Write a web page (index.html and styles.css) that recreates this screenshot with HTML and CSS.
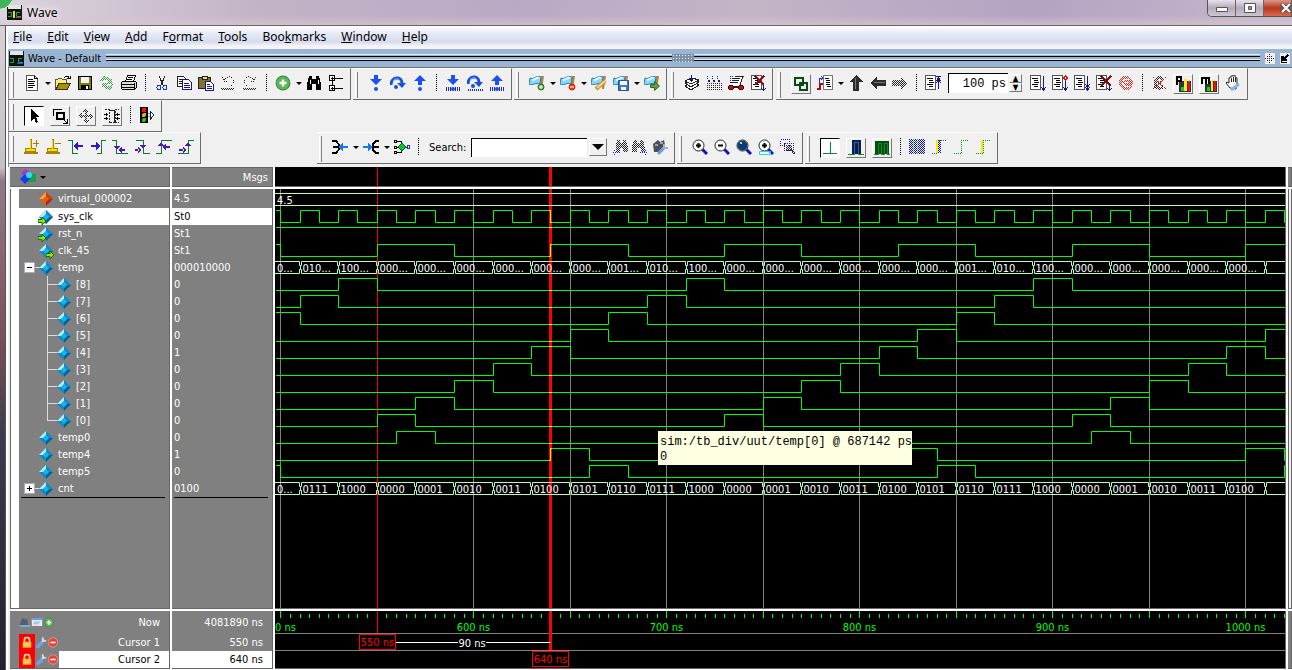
FILE: index.html
```html
<!DOCTYPE html>
<html lang="en">
<head>
    <meta charset="UTF-8">
    <meta name="viewport" content="width=device-width, initial-scale=1.0">
    <title>Wave</title>
    <link rel="stylesheet" href="styles.css">
</head>
<body>
    <!-- shared icon shapes -->
    <svg class="defs" width="0" height="0">
        <defs>
            <pattern id="ditherBlack" width="2" height="2" patternUnits="userSpaceOnUse"><path d="M0 0h1v1H0zM1 1h1v1H1z" fill="#222"/></pattern>
            <pattern id="ditherBlue" width="2" height="2" patternUnits="userSpaceOnUse"><path d="M0 0h1v1H0zM1 1h1v1H1z" fill="#1010a0"/></pattern>
            <pattern id="ditherGreen" width="2" height="2" patternUnits="userSpaceOnUse"><path d="M0 0h1v1H0zM1 1h1v1H1z" fill="#3a9a3a"/></pattern>
            <pattern id="ditherRed" width="2" height="2" patternUnits="userSpaceOnUse"><path d="M0 0h1v1H0zM1 1h1v1H1z" fill="#e03020"/></pattern>
        </defs>
        <symbol id="diamond" viewBox="0 0 16 16">
            <path d="M8 1L15 8L8 15L1 8z" fill="#12a4e0"/>
            <path d="M8 1L8 5L5 8H1z" fill="#b6ecfb"/>
            <path d="M8 1L15 8H11L8 5z" fill="#1688c4"/>
            <path d="M15 8L8 15V11L11 8z" fill="#0a5f8c"/>
            <path d="M1 8L8 15V11L5 8z" fill="#1a86c0"/>
            <path d="M8 5L11 8L8 11L5 8z" fill="#10b4f0"/>
        </symbol>
        <symbol id="diamondOrange" viewBox="0 0 16 16">
            <path d="M8 1L15 8L8 15L1 8z" fill="#e06018"/>
            <path d="M8 1V5L5 8H1z" fill="#f8a050"/>
            <path d="M15 8L8 15V11L11 8z" fill="#a82c10"/>
            <path d="M8 1L15 8H11L8 5z" fill="#c84010"/>
        </symbol>
        <symbol id="ioArrow" viewBox="0 0 8 8">
            <path d="M0 2.500H4V0L8 4L4 8V5.500H0z" fill="#8ae800" stroke="#1a6a10" stroke-width="1"/>
        </symbol>
        <symbol id="page" viewBox="0 0 16 16">
            <path d="M1.500 .5h10v14h-10z" fill="#fff" stroke="#555"/>
            <path d="M3 3.500h6M5 5.500h4M5 7.500h5M3 9.500h6M5 11.500h4" stroke="#000"/>
        </symbol>
        <symbol id="flag" viewBox="0 0 16 16">
            <path d="M12 1h3L13 14h-2z" fill="#b9813c"/>
            <path d="M1 3C4 5 7 0 12 2L11 9C7 7 4 11 0 9z" fill="#8fd4f6" stroke="#1b7fb8"/>
            <path d="M3 5C6 5 7 2 10 3" stroke="#e4f7ff" stroke-width="2" fill="none"/>
        </symbol>
        <symbol id="down" viewBox="0 0 16 16">
            <path d="M6 0h4v4h4L8 10L2 4h4z" fill="#1c50f0"/><circle cx="8" cy="14" r="2" fill="#1c50f0"/>
        </symbol>
        <symbol id="over" viewBox="0 0 16 16">
            <path d="M1 10C1 1 12 1 12 8" fill="none" stroke="#1a50d8" stroke-width="3"/>
            <path d="M7 8h9L12 13z" fill="#1a50d8"/><path d="M3 6C5 3 9 3 10 6" stroke="#7fb8ff" fill="none"/>
            <circle cx="6" cy="12" r="2" fill="#1a50d8"/>
        </symbol>
        <symbol id="up" viewBox="0 0 16 16">
            <path d="M8 0L14 6H10V10H6V6H2z" fill="#1c50f0"/><circle cx="8" cy="14" r="2" fill="#1c50f0"/>
        </symbol>
        <symbol id="bars" viewBox="0 0 16 4">
            <path d="M1.500 0v4M3.500 0v4M5.500 0v4M10.500 0v4M12.500 0v4M14.500 0v4" stroke="#1a2fb0"/>
        </symbol>
        <symbol id="lens" viewBox="0 0 16 16">
            <path d="M10 10L15 15" stroke="#1212c8" stroke-width="3"/>
            <circle cx="6.500" cy="6.500" r="5.500" fill="#fff" stroke="#222"/>
        </symbol>
        <symbol id="binoculars" viewBox="0 0 16 16">
            <path d="M3 1h3v3h4V1h3l2 8v6h-5V9H6v6H1V9z" fill="#000"/>
            <path d="M4.500 5v4M12.500 5v4" stroke="#fff"/>
        </symbol>
        <symbol id="appIcon" viewBox="0 0 15 15">
            <path d="M0 0h15v15H0z" fill="#111"/><path d="M1 0h13v4H1z" fill="#e4e4e4"/>
            <path d="M1 7.500h3.500v4H1M13 7.500H9.500v4H14" stroke="#16b040" fill="none"/>
        </symbol>
        <symbol id="lock" viewBox="0 0 14 14">
            <path d="M4 7V4a3 3 0 0 1 6 0v3" fill="none" stroke="#e8d9b0" stroke-width="2"/>
            <path d="M2 6h10v7H2z" fill="#f5b82e"/><path d="M3 8.500h8M3 10.500h8" stroke="#ffe28a"/>
        </symbol>
        <symbol id="wrench" viewBox="0 0 14 14">
            <path d="M3 12L8 7" stroke="#6ba2ee" stroke-width="4" stroke-linecap="round"/>
            <path d="M8 6L11 4M9 1v4h4" stroke="#d4dae2" stroke-width="2" fill="none"/>
        </symbol>
        <symbol id="minus" viewBox="0 0 14 14">
            <circle cx="7" cy="7" r="5.500" fill="#e0483c" stroke="#f0988c"/><path d="M4 7h6" stroke="#fff" stroke-width="2"/>
        </symbol>
        <symbol id="plus" viewBox="0 0 14 14">
            <circle cx="7" cy="7" r="6" fill="#5cb85a" stroke="#3c8a3a"/><path d="M4 7h6M7 4v6" stroke="#fff" stroke-width="2"/>
        </symbol>
    </svg>

    <header class="titlebar">
        <span class="orb"></span>
        <svg class="app-icon" viewBox="0 0 15 15"><use href="#appIcon"/><path d="M7 6v7" stroke="#e8e020" stroke-width="2"/><path d="M9 12.500h5" stroke="#e02060"/></svg>
        <h1>Wave</h1>
        <div class="window-buttons">
            <button type="button" aria-label="Minimize"><svg viewBox="0 0 14 10"><path d="M1.500 4.500h11v4h-11z" fill="#fff" stroke="#555"/></svg></button>
            <button type="button" aria-label="Maximize"><svg viewBox="0 0 14 10"><path d="M1.500 .5h11v9h-11z" fill="#fff" stroke="#555"/><path d="M5.500 3.500h3v3h-3z" fill="#999" stroke="#555"/></svg></button>
            <button type="button" class="close" aria-label="Close"><svg viewBox="0 0 14 10"><path d="M2 1L12 9M12 1L2 9" stroke="#555" stroke-width="4"/><path d="M3 1L11 9M11 1L3 9" stroke="#fff" stroke-width="2"/></svg></button>
        </div>
    </header>

    <div class="frame">
        <div class="glass"></div>
        <div class="window">
            <nav class="menubar">
                <a href="#"><u>F</u>ile</a>
                <a href="#"><u>E</u>dit</a>
                <a href="#"><u>V</u>iew</a>
                <a href="#"><u>A</u>dd</a>
                <a href="#">F<u>o</u>rmat</a>
                <a href="#"><u>T</u>ools</a>
                <a href="#">Boo<u>k</u>marks</a>
                <a href="#"><u>W</u>indow</a>
                <a href="#"><u>H</u>elp</a>
            </nav>

            <div class="panel-title">
                <svg class="app-icon" viewBox="0 0 15 15"><use href="#appIcon"/><path d="M8 12.500h6" stroke="#3040ff"/></svg>
                <h2>Wave - Default</h2>
                <div class="rails"><span class="dots"></span></div>
                <button type="button" class="mini" aria-label="Undock"><svg viewBox="0 0 9 9"><path d="M4.500 0v9M0 4.500h9M2 2.500h5M2 6.500h5" stroke="#222" stroke-dasharray="1 1"/></svg></button>
                <button type="button" class="mini" aria-label="Zoom pane"><svg viewBox="0 0 9 9"><path d="M1.500 2v6H7" fill="none" stroke="#000"/><path d="M8 1L4 5M3 2v4h4" fill="none" stroke="#000" stroke-width="2"/></svg></button>
            </div>

            <div class="toolbars">
                <div class="row">
                    <div class="group">
                        <button type="button" class="tb" aria-label="New"><svg viewBox="0 0 16 16"><path d="M2.500 .5h8l3 3v12h-11z" fill="#fff" stroke="#555"/><path d="M10.500 .5v3h3M4 4.500h5M4 6.500h7M4 8.500h6M4 10.500h7M4 12.500h5" stroke="#000" fill="none"/></svg></button>
                        <button type="button" class="drop" aria-label="New options"></button>
                        <button type="button" class="tb" aria-label="Open"><svg viewBox="0 0 16 16"><path d="M.5 14V4.500h2l1-1h3l1 1h4V8" fill="#ffef70" stroke="#554"/><path d="M1 14.500L4 8.500H15.500L12 14.500z" fill="#a89200" stroke="#332"/><path d="M9 3C11 0 13 1 14.500 3.500M12 3.500h3V1" fill="none" stroke="#000"/></svg></button>
                        <button type="button" class="tb" aria-label="Save"><svg viewBox="0 0 16 16"><path d="M1.500 1.500h13v13h-13z" fill="#7f7f00" stroke="#000"/><path d="M4 2h8v6H4z" fill="#f4f4f4"/><path d="M4 10h8v4H4z" fill="#000"/><path d="M9 11h2v3H9z" fill="#fff"/></svg></button>
                        <button type="button" class="tb" aria-label="Reload"><svg viewBox="0 0 16 16"><path d="M1 6L4 2C7 0 9 2 11 4L13 3V9H7L9 7C7 4 5 4 4 7z" fill="url(#ditherGreen)"/><path d="M15 9L12 14C9 16 7 14 5 12L3 13V8H9L7 10C9 12 11 12 12 9z" fill="url(#ditherGreen)"/></svg></button>
                        <button type="button" class="tb" aria-label="Print"><svg viewBox="0 0 16 16"><path d="M4.500 6.500L6.500 .5h8l-2 6" fill="#fff" stroke="#000"/><path d="M.5 7.500L3 6h11l1.500 1.500v5l-2 2H2l-1.500-1z" fill="#ddd" stroke="#000"/><path d="M7 2.500h5M6 4.500h5M1 9.500h12M1 12.500h12M13.500 8v6" stroke="#000"/><path d="M9 11h3" stroke="#dd0"/></svg></button>
                        <span class="sep"></span>
                        <button type="button" class="tb" aria-label="Cut"><svg viewBox="0 0 16 16"><path d="M5 1L9 10M11 1L7 10" stroke="#222"/><circle cx="5" cy="12.500" r="2" fill="none" stroke="#1630d8"/><circle cx="11" cy="12.500" r="2" fill="none" stroke="#1630d8"/></svg></button>
                        <button type="button" class="tb" aria-label="Copy"><svg viewBox="0 0 16 16"><path d="M1.500 1.500h6l2 2v8h-8z" fill="#fff" stroke="#222"/><path d="M3 4.500h4M3 6.500h4M3 8.500h4" stroke="#222"/><path d="M6.500 4.500h6l3 3v7h-9z" fill="#fff" stroke="#14148c"/><path d="M8 8.500h5M8 10.500h6M8 12.500h6" stroke="#14148c"/></svg></button>
                        <button type="button" class="tb" aria-label="Paste"><svg viewBox="0 0 16 16"><path d="M.5 2.500h12v11H.5z" fill="#7c7430" stroke="#222"/><path d="M4 1h5v3H4z" fill="#e8e060" stroke="#222"/><path d="M7.500 6.500h5l3 3v6h-8z" fill="#fff" stroke="#14148c"/><path d="M9 9.500h3M9 11.500h5M9 13.500h5" stroke="#14148c"/></svg></button>
                        <button type="button" class="tb" aria-label="Undo"><svg viewBox="0 0 16 16"><path d="M4 5C7 0 14 1 14 6C14 9 12 10 10 11M2 2L4 6L8 6" fill="none" stroke="#222" stroke-dasharray="1 1"/><path d="M1 13.500h14M2 14.500h12" stroke="#222" stroke-dasharray="1 1"/></svg></button>
                        <button type="button" class="tb" aria-label="Redo"><svg viewBox="0 0 16 16"><path d="M12 5C9 0 2 1 2 6C2 9 4 10 6 11M14 2L12 6L8 6" fill="none" stroke="#222" stroke-dasharray="1 1"/><path d="M1 13.500h14M2 14.500h12" stroke="#222" stroke-dasharray="1 1"/></svg></button>
                        <span class="sep"></span>
                        <button type="button" class="tb smooth" aria-label="Add"><svg viewBox="0 0 14 14"><use href="#plus"/></svg></button>
                        <button type="button" class="drop" aria-label="Add options"></button>
                        <button type="button" class="tb" aria-label="Find"><svg viewBox="0 0 16 16"><use href="#binoculars"/></svg></button>
                        <button type="button" class="tb" aria-label="Expand tree"><svg viewBox="0 0 16 16"><path d="M1.500 .5h5v5h-5zM1.500 10.500h5v5h-5z" fill="#fff" stroke="#000"/><path d="M3 3.500h3M4.500 2v3M3 13.500h3M4.500 12v3M7 3.500h8M7 13.500h8M4.500 6v4" stroke="#000"/></svg></button>
                    </div>
                    <div class="group">
                        <button type="button" class="tb smooth" aria-label="Step into"><svg viewBox="0 0 16 16"><use href="#down"/></svg></button>
                        <button type="button" class="tb smooth" aria-label="Step over"><svg viewBox="0 0 16 16"><use href="#over"/></svg></button>
                        <button type="button" class="tb smooth" aria-label="Step out"><svg viewBox="0 0 16 16"><use href="#up"/></svg></button>
                        <span class="sep"></span>
                        <button type="button" class="tb smooth" aria-label="Step into current"><svg viewBox="0 0 16 16"><use href="#down"/><use href="#bars" y="12" height="4"/></svg></button>
                        <button type="button" class="tb smooth" aria-label="Step over current"><svg viewBox="0 0 16 16"><use href="#over" y="-1"/><path d="M1 15h15" stroke="#1a2fb0" stroke-width="2" stroke-dasharray="1 1"/></svg></button>
                        <button type="button" class="tb smooth" aria-label="Step out current"><svg viewBox="0 0 16 16"><use href="#up"/><use href="#bars" y="12" height="4"/></svg></button>
                    </div>
                    <div class="group">
                        <button type="button" class="tb smooth" aria-label="Add bookmark"><svg viewBox="0 0 16 16"><use href="#flag"/><circle cx="12" cy="12" r="3" fill="#58a848" stroke="#2c6a20"/><path d="M10 12h4M12 10v4" stroke="#fff"/></svg></button>
                        <button type="button" class="drop" aria-label="Bookmark options"></button>
                        <button type="button" class="tb smooth" aria-label="Delete bookmark"><svg viewBox="0 0 16 16"><use href="#flag"/><circle cx="12" cy="12" r="3" fill="#e84010" stroke="#b02c08"/><path d="M10 12h4" stroke="#fff"/></svg></button>
                        <button type="button" class="drop" aria-label="Delete options"></button>
                        <button type="button" class="tb smooth" aria-label="Edit bookmark"><svg viewBox="0 0 16 16"><use href="#flag"/><path d="M5 14L14 6" stroke="#c8882c" stroke-width="4"/><path d="M6 13L14 6" stroke="#f8d888" stroke-width="2"/></svg></button>
                        <button type="button" class="tb smooth" aria-label="Save bookmark"><svg viewBox="0 0 16 16"><use href="#flag"/><path d="M5.500 5.500h10v10h-10z" fill="#3a78c8" stroke="#2a5090"/><path d="M7 6h7v4H7zM8 12h5v3H8z" fill="#f4f4f4"/></svg></button>
                        <button type="button" class="drop" aria-label="Save options"></button>
                        <button type="button" class="tb smooth" aria-label="Go to bookmark"><svg viewBox="0 0 16 16"><use href="#flag"/><path d="M6.500 9.500h4v-3l5 4.500l-5 4.500v-3h-4z" fill="#5ca040" stroke="#2c6a20"/></svg></button>
                    </div>
                    <div class="group">
                        <button type="button" class="tb" aria-label="Layers"><svg viewBox="0 0 16 16"><path d="M1 11L8 7L15 10L7 15z" fill="#fff" stroke="#222"/><path d="M1 8L8 4L15 7L7 12z" fill="#fff" stroke="#222"/><path d="M1 6L8 3L15 5L7 9z" fill="#fff" stroke="#222"/><path d="M7.500 0v5M5 3l2.500 3L10 3" stroke="#14148c" fill="none"/></svg></button>
                        <button type="button" class="tb" aria-label="Signals grid"><svg viewBox="0 0 16 16"><path d="M1 1.500h15M1 3.500h15" stroke="#1a1a8c" stroke-dasharray="1 4"/><path d="M2 6h2M7 6h2M12 6h2" stroke="#1a1a8c" stroke-width="2"/><path d="M1 8.500h15M1 10.500h15M1 12.500h15M1 14.500h15" stroke="#222" stroke-dasharray="1 1"/></svg></button>
                        <button type="button" class="tb" aria-label="Search log"><svg viewBox="0 0 16 16"><path d="M5 1h9L11 10H2z" fill="#fff"/><path d="M7 1.500h8L12 10M5 3.500h7M4 5.500h7M3 7.500h7" stroke="#222" fill="none"/><path d="M2 1v8M4 1v6" stroke="#1a1a8c" stroke-dasharray="1 1"/><path d="M4 12h9" stroke="#222" stroke-width="2"/><circle cx="3" cy="12.500" r="2.500" fill="#c01020" stroke="#400"/><circle cx="13" cy="12.500" r="2.500" fill="#c01020" stroke="#400"/></svg></button>
                        <button type="button" class="tb" aria-label="Clear log"><svg viewBox="0 0 16 16"><use href="#page"/><path d="M13.500 9v6M11 13l2.500 2L16 13" stroke="#14148c" fill="none"/><path d="M5 1L14 10M14 1L5 10" stroke="#8c1010" stroke-width="2"/></svg></button>
                    </div>
                    <div class="group wide-gap">
                        <button type="button" class="tb box" aria-label="Link"><svg viewBox="0 0 16 16"><path d="M2 2h8v7H2zM7 7h7v7H7z" fill="none" stroke="#084c14" stroke-width="2"/></svg></button>
                        <button type="button" class="tb" aria-label="Restart"><svg viewBox="0 0 16 16"><path d="M6.500 .5h9v14h-9z" fill="#fff" stroke="#777"/><path d="M8 3.500h4M9 5.500h4M9 7.500h4M9 9.500h4M10 11.500h4" stroke="#000"/><path d="M2.500 8V3h3M4 1l2 2l-2 2" stroke="#1630d8" fill="none"/><path d="M0 14h3V9h3" stroke="#a01018" stroke-width="2" fill="none"/></svg></button>
                        <button type="button" class="drop" aria-label="Restart options"></button>
                        <button type="button" class="tb" aria-label="Up"><svg viewBox="0 0 16 16"><path d="M8 0L15 7H11V16H5V7H1z" fill="#2c2c2c"/><path d="M7.500 3v11" stroke="#777"/></svg></button>
                        <button type="button" class="tb" aria-label="Back"><svg viewBox="0 0 16 16"><path d="M0 8L7 2V5H16V11H7V14z" fill="#2c2c2c"/><path d="M4 7.500h11" stroke="#777"/></svg></button>
                        <button type="button" class="tb" aria-label="Forward"><svg viewBox="0 0 16 16"><path d="M16 8L9 2V5H0V11H9V14z" fill="url(#ditherBlack)"/></svg></button>
                        <span class="sep"></span>
                        <button type="button" class="tb" aria-label="Restart simulation"><svg viewBox="0 0 16 16"><use href="#page" x="-1"/><path d="M13.500 2v12M11 1.500h5M11 6l2.500-3L16 6M11 8l2.500-3L16 8" stroke="#14148c" fill="none"/></svg></button>
                        <input class="run-length" type="text" value="100 ps" aria-label="Run length">
                        <span class="spin"><button type="button" aria-label="Increase">&#9650;</button><button type="button" aria-label="Decrease">&#9660;</button></span>
                        <button type="button" class="tb" aria-label="Run"><svg viewBox="0 0 16 16"><use href="#page" x="-1"/><path d="M13.500 1v14M11 12l2.500 3L16 12" stroke="#14148c" fill="none"/></svg></button>
                        <button type="button" class="tb" aria-label="Continue run"><svg viewBox="0 0 16 16"><use href="#page" x="-1"/><path d="M13.500 5v10M11 12l2.500 3L16 12" stroke="#14148c" fill="none"/><path d="M13.500 1l2 2l-2 2l-2-2z" fill="#fff" stroke="#e01010"/></svg></button>
                        <button type="button" class="tb" aria-label="Run all"><svg viewBox="0 0 16 16"><use href="#page" x="-1"/><path d="M13.500 1v14M11 9l2.500 3L16 9M11 12l2.500 3L16 12" stroke="#14148c" fill="none"/></svg></button>
                        <button type="button" class="tb" aria-label="Break"><svg viewBox="0 0 16 16"><use href="#page" x="-1"/><path d="M13.500 9v6M11 13l2.500 2L16 13" stroke="#14148c" fill="none"/><path d="M5 1L15 11M15 1L5 11" stroke="#7c1010" stroke-width="2"/></svg></button>
                        <button type="button" class="tb" aria-label="Stop"><svg viewBox="0 0 16 16"><circle cx="8" cy="8" r="7" fill="url(#ditherRed)"/><path d="M11 5C7 3 4 6 5 9C6 12 10 12 12 11M7 7.500h4" stroke="#fff" fill="none"/></svg></button>
                        <span class="sep"></span>
                        <button type="button" class="tb" aria-label="Disable coverage"><svg viewBox="0 0 16 16"><path d="M12 4C8 1 4 4 4 8C4 12 8 15 12 12" stroke="url(#ditherBlack)" stroke-width="3" fill="none"/><path d="M2 2L15 14M15 2L2 14" stroke="#b02020" stroke-dasharray="2 1"/></svg></button>
                        <button type="button" class="tb box" aria-label="Performance profile"><svg viewBox="0 0 16 16"><path d="M4 5h12v11H4z" fill="#333"/><path d="M2 9V1h4v4H2" fill="#f0f0f0" stroke="#000" stroke-width="2"/><path d="M6 11h3v4H6z" fill="#10d020"/><path d="M9 3h3v12H9z" fill="#ffe81a"/><path d="M13 5h2v10h-2z" fill="#f01010"/></svg></button>
                        <button type="button" class="tb box" aria-label="Memory profile"><svg viewBox="0 0 16 16"><path d="M4 5h12v11H4z" fill="#333"/><path d="M0 1h9v7H0z" fill="#f0f0f0"/><path d="M1 8V2h7v6M4.500 2v6" fill="none" stroke="#000" stroke-width="2"/><path d="M6 11h3v4H6z" fill="#10d020"/><path d="M10 4h2v11h-2z" fill="#ffe81a"/><path d="M13 5h2v10h-2z" fill="#f01010"/></svg></button>
                        <button type="button" class="tb smooth" aria-label="Pan"><svg viewBox="0 0 16 16"><path d="M5 13L1 8L2 7L4 8V3L6 2V1h2V0h2v2l2 1v6l-1 5z" fill="#fff" stroke="#222"/><path d="M6.500 3v4M8.500 2v5M10.500 3v4" stroke="#222"/><path d="M6 15L14 9" stroke="#8ab4e8" stroke-width="3"/></svg></button>
                    </div>
                </div>

                <div class="row">
                    <div class="group">
                        <button type="button" class="tb box on" aria-label="Select mode"><svg viewBox="0 0 16 16"><path d="M5 1V13L8 10L10 15L12 14L10 9H14z" fill="#000"/></svg></button>
                        <button type="button" class="tb box" aria-label="Zoom mode"><svg viewBox="0 0 16 16"><path d="M1.500 8V1.500H10" fill="none" stroke="#000"/><path d="M5 5h7v6H5z" fill="none" stroke="#000" stroke-width="2"/><path d="M10 10L15 15M15 11v4h-4" fill="none" stroke="#000"/></svg></button>
                        <button type="button" class="tb box" aria-label="Pan mode"><svg viewBox="0 0 16 16"><path d="M8 0L11 4H9V7H12V5L16 8L12 11V9H9V12H11L8 16L5 12H7V9H4V11L0 8L4 5V7H7V4H5z" fill="url(#ditherBlack)"/></svg></button>
                        <button type="button" class="tb box" aria-label="Edit mode"><svg viewBox="0 0 16 16"><path d="M1 1.500h4v13h6v-13h4M11 14.500h4" fill="none" stroke="#222" stroke-dasharray="2 1"/><path d="M5.500 2h5v12" fill="none" stroke="#222"/><path d="M0 6.500h4M0 10.500h4M12 6.500h4M12 10.500h4M2.500 5v3M2.500 9v3M13.500 5v3M13.500 9v3" stroke="#000"/></svg></button>
                        <span class="sep"></span>
                        <button type="button" class="tb" aria-label="Stop wave drawing"><svg viewBox="0 0 16 16"><path d="M1 0h8v16H1z" fill="#000"/><circle cx="5" cy="3" r="2.500" fill="#f01010"/><circle cx="5" cy="8" r="2" fill="#e8a818"/><circle cx="5" cy="13" r="2" fill="#20c020"/><path d="M11.500 4.500L15 8L11.500 12z" fill="#fff" stroke="#222"/><path d="M9 6.500h2M9 9.500h2" stroke="#20c0e0"/></svg></button>
                    </div>
                </div>

                <div class="row">
                    <div class="group">
                        <button type="button" class="tb" aria-label="Insert cursor"><svg viewBox="0 0 16 16"><path d="M6 0h2v9h4v4H1V9h5zM0 13h14v2H0z" fill="#a88200"/><path d="M6 1h1v9h4v2H2v-2h4z" fill="#ffe000"/><path d="M9 4.500h6M12.500 1v7" stroke="#a07c00"/></svg></button>
                        <button type="button" class="tb" aria-label="Delete cursor"><svg viewBox="0 0 16 16"><path d="M6 0h2v9h4v4H1V9h5zM0 13h14v2H0z" fill="#a88200"/><path d="M6 1h1v9h4v2H2v-2h4z" fill="#ffe000"/><path d="M9 4.500h6" stroke="#a07c00"/></svg></button>
                        <button type="button" class="tb" aria-label="Previous transition"><svg viewBox="0 0 16 16"><path d="M0 1.500h4.500v13h5" fill="none" stroke="#0a7a30"/><path d="M5 7L10 3v3h5v2h-5v3z" fill="#3c10d0"/></svg></button>
                        <button type="button" class="tb" aria-label="Next transition"><svg viewBox="0 0 16 16"><path d="M7 14.500h4.500v-13h4" fill="none" stroke="#0a7a30"/><path d="M11 7L6 3v3H1v2h5v3z" fill="#3c10d0"/></svg></button>
                        <button type="button" class="tb" aria-label="Previous falling edge"><svg viewBox="0 0 16 16"><path d="M0 1.500h4.500v13h11" fill="none" stroke="#0a7a30"/><path d="M2 7h6L5 11zM6 11l4-3v6zM9 10h4v2H9z" fill="#4818b8"/></svg></button>
                        <button type="button" class="tb" aria-label="Next falling edge"><svg viewBox="0 0 16 16"><path d="M2 1.500h7.500v13h6" fill="none" stroke="#0a7a30"/><path d="M6 6h6L9 10zM8 11L4 8v6zM1 10h4v2H1z" fill="#4818b8"/></svg></button>
                        <button type="button" class="tb" aria-label="Previous rising edge"><svg viewBox="0 0 16 16"><path d="M0 14.500h5.500v-13h10" fill="none" stroke="#0a7a30"/><path d="M2 7h6L5 3zM6 8l4-3v6zM9 7h5v2H9z" fill="#4818b8"/></svg></button>
                        <button type="button" class="tb" aria-label="Next rising edge"><svg viewBox="0 0 16 16"><path d="M0 14.500h10.500v-13h5" fill="none" stroke="#0a7a30"/><path d="M7 7h6L10 3zM9 11L5 8v6zM1 10h5v2H1z" fill="#4818b8"/></svg></button>
                    </div>
                    <div class="group search-group">
                        <button type="button" class="tb" aria-label="Find previous driver"><svg viewBox="0 0 16 16"><path d="M0 2h4l4 5M0 14h4l4-5M1 8h6" fill="none" stroke="#000" stroke-width="2"/><path d="M6 8L11 4v3h5v2h-5v3z" fill="#1478f0"/></svg></button>
                        <button type="button" class="drop" aria-label="Driver options"></button>
                        <button type="button" class="tb" aria-label="Find reader"><svg viewBox="0 0 16 16"><path d="M16 2h-3L10 5v6l3 3h3M10 8h6" fill="none" stroke="#000" stroke-width="2"/><path d="M10 8L5 4v3H0v2h5v3z" fill="#1478f0"/></svg></button>
                        <button type="button" class="drop" aria-label="Reader options"></button>
                        <button type="button" class="tb" aria-label="Trace"><svg viewBox="0 0 16 16"><path d="M3 2.500h4.500v11H3M2 8.500h12" fill="none" stroke="#000"/><path d="M.5 1.500h2v2h-2zM.5 7.500h2v2h-2zM.5 12.500h2v2h-2z" fill="#fff" stroke="#000"/><path d="M8 4l4 4l-4 4l-4-4z" fill="#10c030" stroke="#063"/><path d="M13.500 6.500h2v3h-2z" fill="#fff" stroke="#1630d8"/></svg></button>
                        <span class="sep"></span>
                        <label for="search">Search:</label>
                        <input id="search" class="search" type="text">
                        <button type="button" class="combo" aria-label="Search history"></button>
                        <button type="button" class="tb" aria-label="Search backward"><svg viewBox="0 0 16 16"><path d="M5 1h3v3h3V1h3l2 8v4h-5V9H8v4H4V8z" fill="url(#ditherBlack)"/><path d="M1 13.500h7M1 13.500l3-3M1 13.500l2 2" stroke="#1c1ce0" stroke-dasharray="1 1" fill="none"/></svg></button>
                        <button type="button" class="tb near" aria-label="Search forward"><svg viewBox="0 0 16 16"><path d="M2 1h3v3h3V1h3l2 8v4H9V9H5v4H0V8z" fill="url(#ditherBlack)"/><path d="M8 13.500h7M15 13.500l-3-3M15 13.500l-2 2" stroke="#1c1ce0" stroke-dasharray="1 1" fill="none"/></svg></button>
                        <button type="button" class="tb smooth" aria-label="Search options"><svg viewBox="0 0 16 16"><path d="M1 5L6 1L8 3L12 1L13 6L6 13H2z" fill="#4a5058"/><path d="M3 6h3M8 4h3" stroke="#9aa4ae" stroke-width="2"/><path d="M7 14L12 9" stroke="#6a9ce0" stroke-width="3" stroke-linecap="round"/><path d="M12 5v4h4" stroke="#a8b0bc" stroke-width="2" fill="none"/></svg></button>
                    </div>
                    <div class="group">
                        <button type="button" class="tb smooth" aria-label="Zoom in"><svg viewBox="0 0 16 16"><use href="#lens"/><path d="M4 6.500h5M6.500 4v5" stroke="#000" stroke-width="2"/></svg></button>
                        <button type="button" class="tb smooth" aria-label="Zoom out"><svg viewBox="0 0 16 16"><use href="#lens"/><path d="M4 6.500h5" stroke="#000" stroke-width="2"/></svg></button>
                        <button type="button" class="tb smooth" aria-label="Zoom full"><svg viewBox="0 0 16 16"><use href="#lens"/><circle cx="6.500" cy="6.500" r="5" fill="#0c3c70"/><circle cx="5" cy="4" r="1" fill="#fff"/></svg></button>
                        <button type="button" class="tb smooth" aria-label="Zoom in on cursor"><svg viewBox="0 0 16 16"><use href="#lens"/><path d="M4 6.500h5M6.500 4v5" stroke="#000" stroke-width="2"/><path d="M1.500 12.500h11v3h-11zM5.500 1v2" fill="none" stroke="#20d8e8"/></svg></button>
                        <button type="button" class="tb" aria-label="Zoom other"><svg viewBox="0 0 16 16"><path d="M.5 .5h9v6h-9zM4.500 4.500h9V11h-9z" fill="none" stroke="#1a1a8c" stroke-dasharray="1 1"/><circle cx="9" cy="9" r="3" fill="url(#ditherBlack)"/><path d="M11 11L15 15" stroke="#333" stroke-width="2" stroke-dasharray="1 1"/></svg></button>
                    </div>
                    <div class="group">
                        <button type="button" class="tb box on" aria-label="Waveform"><svg viewBox="0 0 16 16"><path d="M1 13.500h14M8.500 2v12" stroke="#0a8a30"/></svg></button>
                        <button type="button" class="tb box" aria-label="Expand one"><svg viewBox="0 0 16 16"><path d="M4 0h9v14H4z" fill="#14146c"/><path d="M0 14.500h6.500V2.500h4v12H16" fill="none" stroke="#0a8a30"/></svg></button>
                        <button type="button" class="tb box" aria-label="Expand all"><svg viewBox="0 0 16 16"><path d="M1 1h14v13H1z" fill="#064c0c"/><path d="M0 14.500h4.500V3.500h3v11h3v-11h3v11H16" fill="none" stroke="#0a8a30"/></svg></button>
                        <span class="sep"></span>
                        <button type="button" class="tb" aria-label="Expand full"><svg viewBox="0 0 16 16"><path d="M0 0h16v15H0z" fill="url(#ditherBlue)"/><path d="M4.500 0v15M8.500 0v15" stroke="#3a9a70" stroke-dasharray="1 1"/></svg></button>
                        <button type="button" class="tb" aria-label="Expand cursor"><svg viewBox="0 0 16 16"><path d="M6 1h4v13H6z" fill="url(#ditherBlue)"/><path d="M6 1v13" stroke="#ffe800" stroke-width="2"/><path d="M1 14.500h6M8 1.500h7" stroke="#0a8a30" stroke-dasharray="1 1"/></svg></button>
                        <button type="button" class="tb" aria-label="Collapse all"><svg viewBox="0 0 16 16"><path d="M1 14.500h7.500v-13H15" fill="none" stroke="#0a8a30" stroke-dasharray="1 1"/></svg></button>
                        <button type="button" class="tb" aria-label="Collapse cursor"><svg viewBox="0 0 16 16"><path d="M7 1v14" stroke="#ffe800" stroke-width="2"/><path d="M1 14.500h7.500v-13H15" fill="none" stroke="#0a8a30" stroke-dasharray="1 1"/></svg></button>
                    </div>
                </div>
            </div>

            <main class="wave">
                <div class="cell head name-head">
                    <svg viewBox="0 0 16 16"><path d="M5 0L10 3L5 8L1 4z" fill="#b030d8"/><path d="M8 5h8v8H8z" fill="#18a050"/><path d="M5 5L10 10L5 15L0 10z" fill="#1040e8"/><circle cx="9" cy="6" r="3" fill="#30d8f8"/></svg>
                    <button type="button" class="drop" aria-label="Object options"></button>
                </div>
                <div class="cell head msgs">Msgs</div>
                <div class="cell black"><svg class="plot" id="headPlot"></svg></div>
                <div class="cell head"></div>

                <div class="cell names">
                    <ul id="names"></ul>
                </div>
                <div class="cell values">
                    <ul id="values"></ul>
                </div>
                <div class="cell black">
                    <svg class="plot" id="wavePlot"></svg>
                    <div class="tip">sim:/tb_div/uut/temp[0] @ 687142 ps<br>0</div>
                </div>
                <div class="cell scroll"></div>

                <div class="cell foot">
                    <div class="now">
                        <svg viewBox="0 0 14 14"><path d="M1 10L3 3L6 2L7 4L9 2L11 10z" fill="#555f6c"/><path d="M1 11h12" stroke="#78b4f0" stroke-width="2"/></svg>
                        <svg viewBox="0 0 14 14"><path d="M1 2h12v9H1z" fill="#e8eef8"/><path d="M1 3h12" stroke="#5a94e0" stroke-width="2"/><path d="M3 6.500h8M3 8.500h6" stroke="#8aa4c8"/></svg>
                        <svg viewBox="0 0 14 14"><use href="#plus" x="1" y="1" width="12" height="12"/></svg>
                        <span>Now</span>
                    </div>
                    <div class="cursor">
                        <svg class="locked" viewBox="0 0 14 14"><use href="#lock"/></svg>
                        <svg viewBox="0 0 14 14"><use href="#wrench"/></svg>
                        <svg viewBox="0 0 14 14"><use href="#minus"/></svg>
                        <span>Cursor 1</span>
                    </div>
                    <div class="cursor active">
                        <svg class="locked" viewBox="0 0 14 14"><use href="#lock"/></svg>
                        <svg viewBox="0 0 14 14"><use href="#wrench"/></svg>
                        <svg viewBox="0 0 14 14"><use href="#minus"/></svg>
                        <span>Cursor 2</span>
                    </div>
                </div>
                <div class="cell foot">
                    <div class="now"><span>4081890 ns</span></div>
                    <div class="cursor"><span>550 ns</span></div>
                    <div class="cursor active"><span>640 ns</span></div>
                </div>
                <div class="cell black"><svg class="plot" id="rulerPlot"></svg></div>
                <div class="cell foot"></div>
            </main>
        </div>
    </div>

    <script src="wave.js"></script>
</body>
</html>
```
FILE: styles.css
```css
* {
    box-sizing: border-box;
}

body {
    margin: 0;
    height: 100vh;
    display: flex;
    flex-direction: column;
    overflow: hidden;
    background: #f0f0f0;
    font-family: "DejaVu Sans Condensed", "Noto Sans", sans-serif;
    font-size: 11px;
    color: #000;
}

button, input {
    font: inherit;
    margin: 0;
    padding: 0;
    border: 0;
    background: none;
    color: inherit;
}

h1, h2, ul {
    margin: 0;
    padding: 0;
    font-weight: normal;
    list-style: none;
}

svg {
    display: block;
    flex: none;
}

.defs {
    position: absolute;
}

/* title bar */
.titlebar {
    position: relative;
    flex: none;
    height: 26px;
    display: flex;
    align-items: center;
    padding-left: 7px;
    background: linear-gradient(rgba(255, 255, 255, 0) 60%, rgba(220, 200, 208, 0.6)), linear-gradient(90deg, #dcd3dc, #c2b4c6 20%, #b8aac4 40%, #c3b5c6 58%, #b3a3c3 80%, #c4b8ca);
    border-bottom: 1px solid #666;
    overflow: hidden;
}

.orb {
    position: absolute;
    left: -16px;
    top: -20px;
    width: 30px;
    height: 30px;
    border-radius: 50%;
    background: #3fb45c;
    border: 1px solid #e8f4e8;
}

.app-icon {
    width: 15px;
    height: 15px;
}

.titlebar h1 {
    margin-left: 5px;
    font-family: "Noto Sans", sans-serif;
    font-size: 12px;
    line-height: 24px;
    text-shadow: 0 0 6px #fff, 0 0 10px #fff;
}

.window-buttons {
    margin-left: auto;
    align-self: flex-start;
    display: flex;
    height: 17px;
    border: 1px solid #555;
    border-top: 0;
    border-right: 0;
    border-radius: 0 0 0 5px;
    overflow: hidden;
}

.window-buttons button {
    width: 28px;
    display: flex;
    align-items: center;
    justify-content: center;
    border-right: 1px solid #6a6470;
    background: linear-gradient(#e8e2ea, #b4aab8 50%, #cfc6d2);
}

.window-buttons .close {
    width: 28px;
    padding-left: 16px;
    background: linear-gradient(#d89888, #b83820 50%, #d86a50);
}

.window-buttons svg {
    width: 14px;
    height: 10px;
}

.frame {
    flex: 1;
    display: flex;
    min-height: 0;
}

.glass {
    width: 6px;
    flex: none;
    background: linear-gradient(#d8d2d8, #c4c0c6 22%, #94788a 24%, #7c5058 48%, #3c3a4c 64%, #22222c);
    border-right: 1px solid #555;
}

.window {
    flex: 1;
    min-width: 0;
    display: flex;
    flex-direction: column;
    border-left: 2px solid #fff;
}

/* menus */
.menubar {
    flex: none;
    height: 20px;
    display: flex;
    gap: 15px;
    padding-left: 5px;
    background: linear-gradient(#fff, #e4e9f5 40%, #d6dcec 80%, #f4f4f8);
    font-family: "Noto Sans", sans-serif;
    font-size: 12px;
    line-height: 21px;
}

.menubar a {
    color: #000;
    text-decoration: none;
}

.panel-title {
    flex: none;
    height: 22px;
    display: flex;
    align-items: center;
    gap: 5px;
    padding: 0 2px 0 1px;
    background: #9ab5d3;
    border-top: 3px solid #f4f4f4;
    border-bottom: 1px solid #707070;
}

.panel-title h2 {
    margin-left: -1px;
    font-size: 11px;
}

.rails {
    flex: 1;
    height: 8px;
    display: flex;
    justify-content: center;
    background: linear-gradient(#dff4fa 1px, #9ab5d3 1px, #9ab5d3 2px, #000 2px, #000 3px, #9ab5d3 3px, #9ab5d3 5px, #dff4fa 5px, #dff4fa 6px, #000 6px, #000 7px, #9ab5d3 7px);
}

.dots {
    width: 22px;
    background: radial-gradient(circle, #fff 1px, #7890aa 1px) 0 0 / 3px 3px;
}

.mini {
    width: 10px;
    height: 11px;
    background: #f0f0f0;
}

.mini svg {
    width: 9px;
    height: 9px;
    shape-rendering: crispEdges;
}

/* toolbars */
.toolbars {
    flex: none;
    border-left: 1px solid #8a8a8a;
    padding-bottom: 3px;
}

.row {
    display: flex;
    gap: 2px;
    height: 32px;
}

.group {
    flex: none;
    display: flex;
    align-items: center;
    padding: 0 3px 2px 12px;
    border-right: 1px solid #6c6c6c;
    border-bottom: 1px solid #6c6c6c;
    border-top: 1px solid #fff;
    background: linear-gradient(#808080, #808080) 4px 3px / 1px 26px no-repeat, linear-gradient(#fff, #fff) 2px 3px / 1px 26px no-repeat;
}

.wide-gap {
    margin-left: 1px;
}

.search-group {
    margin-left: 114px;
}

.tb {
    flex: none;
    width: 22px;
    height: 22px;
    display: flex;
    align-items: center;
    justify-content: center;
}

.tb svg {
    width: 16px;
    height: 16px;
    shape-rendering: crispEdges;
}

.smooth svg {
    shape-rendering: auto;
}

.near {
    width: 18px;
}

.box {
    width: 20px;
    height: 20px;
    margin: 2px 3px 0;
    border: 1px solid;
    border-color: #fff #777 #777 #fff;
}

.box.on {
    background: #fff;
    border-color: #000 #fff #fff #000;
}

.drop {
    width: 9px;
    height: 20px;
    display: flex;
    align-items: center;
    justify-content: center;
}

.drop::before, .combo::before {
    content: "";
    border: 3px solid transparent;
    border-top-color: #000;
    border-bottom: 0;
}

.sep {
    width: 1px;
    height: 18px;
    margin: 0 5px;
    background: repeating-linear-gradient(#000 0 1px, transparent 1px 2px);
}

.run-length {
    width: 60px;
    height: 20px;
    margin-left: 4px;
    padding-right: 2px;
    text-align: right;
    background: #fff;
    border-top: 1px solid #000;
    border-left: 1px solid #000;
    font-family: "Liberation Mono", monospace;
    font-size: 12px;
}

.spin {
    width: 13px;
    height: 18px;
    margin: 0 5px 0 1px;
    display: flex;
    flex-direction: column;
}

.spin button {
    flex: 1;
    font-size: 8px;
    line-height: 7px;
    border: 1px solid;
    border-color: #fff #777 #777 #fff;
}

.group label {
    margin: 0 5px;
}

.search {
    width: 116px;
    height: 19px;
    background: #fff;
    border-top: 1px solid #000;
    border-left: 1px solid #000;
}

.combo {
    width: 18px;
    height: 18px;
    margin: 0 2px;
    display: flex;
    align-items: center;
    justify-content: center;
    border: 1px solid;
    border-color: #fff #777 #777 #fff;
}

.combo::before {
    border-width: 6px;
    border-bottom: 0;
}

/* wave area: names, values, plot, scroll strip */
.wave {
    flex: 1;
    min-height: 0;
    display: grid;
    grid-template-columns: 160px 101px minmax(0, 1fr) 4px;
    grid-template-rows: 20px minmax(0, 1fr) 58px;
    gap: 2px;
    margin-left: 2px;
    padding-bottom: 1px;
    background: #fff;
}

.cell {
    position: relative;
    overflow: hidden;
    background: #808080;
    color: #fff;
    border-right: 1px solid #666;
    border-bottom: 1px solid #666;
}

.head {
    border-top: 1px solid #666;
}

.name-head {
    display: flex;
    align-items: center;
    gap: 2px;
    padding-left: 10px;
}

.name-head svg {
    width: 16px;
    height: 16px;
}

.msgs {
    padding-right: 4px;
    text-align: right;
    line-height: 19px;
}

.black {
    background: #000;
}

.plot {
    width: 100%;
    height: 100%;
    font-size: 11px;
}

.names {
    border-left: 1px solid #666;
    background: linear-gradient(90deg, #fff 8px, #808080 8px);
}

.names ul {
    padding-left: 8px;
}

.names li {
    height: 17px;
    display: flex;
    align-items: center;
    padding-left: 19px;
    line-height: 17px;
}

.names li:first-child, .values li:first-child {
    height: 19px;
    line-height: 20px;
}

.names li.parent {
    padding-left: 6px;
    background: linear-gradient(#ddd, #ddd) 14px 8px / 8px 1px no-repeat;
}

.names li.bit {
    padding-left: 37px;
    background: linear-gradient(#ddd, #ddd) 28px 0 / 1px 100% no-repeat, linear-gradient(#ddd, #ddd) 28px 8px / 10px 1px no-repeat;
}

.names li.bit.last {
    background: linear-gradient(#ddd, #ddd) 28px 0 / 1px 9px no-repeat, linear-gradient(#ddd, #ddd) 28px 8px / 10px 1px no-repeat;
}

.names li svg {
    width: 16px;
    height: 16px;
    margin-right: 4px;
}

.names li.selected, .values li.selected {
    background: #fff;
    color: #000;
}

.toggle {
    position: relative;
    width: 9px;
    height: 9px;
    margin-right: 4px;
    background: #fff;
    outline: 1px solid #aab;
}

.toggle::before, .toggle.plus::after {
    content: "";
    position: absolute;
    left: 2px;
    top: 4px;
    width: 5px;
    height: 1px;
    background: #000;
}

.toggle.plus::after {
    left: 4px;
    top: 2px;
    width: 1px;
    height: 5px;
}

.values li {
    height: 17px;
    padding-left: 2px;
    line-height: 17px;
}

.names ul::after, .values ul::after {
    content: "";
    display: block;
    height: 1px;
    margin: 0 4px 0 2px;
    background: #000;
}

.scroll {
    background: #f0f0f0;
    border-left: 1px solid #666;
}

/* cursor rows under the plot */
.foot > div {
    height: 17px;
    display: flex;
    align-items: center;
    padding-left: 9px;
}

.foot .now {
    height: 23px;
}

.foot svg {
    width: 12px;
    height: 13px;
}

.foot .locked {
    width: 16px;
    height: 17px;
    padding: 2px;
    background: #f00;
}

.foot span {
    flex: 1;
    align-self: stretch;
    padding-right: 9px;
    display: flex;
    align-items: center;
    justify-content: flex-end;
}

.foot .active {
    color: #000;
}

.foot .active span {
    background: #fff;
}

.foot .active span:first-child {
    margin-left: -9px;
}

.tip {
    position: absolute;
    left: 383px;
    top: 242px;
    padding: 4px 0 0 2px;
    background: #ffffe1;
    color: #000;
    font-family: "Liberation Mono", monospace;
    font-size: 12px;
    line-height: 15px;
    white-space: nowrap;
}
```
FILE: wave.js
```js
const PX_PER_NS = 1.9305;
const START = 497;
const END = 1020;
const GREEN = "#00ff00";
const BUS = "#b4ffb4";

// x inside the plot for a time in ns, on a pixel centre
function xAt(t) {
    if (t <= START) return 1.5;
    return Math.round((t - 500) * PX_PER_NS + 0.2) + 5.5;
}

const signals = [
    { name: "virtual_000002", value: "4.5", type: "const" },
    { name: "sys_clk", value: "St0", io: "in", selected: true, level: t => Math.floor(t / 10) % 2 },
    { name: "rst_n", value: "St1", io: "in", level: () => 1 },
    { name: "clk_45", value: "St1", io: "out", level: t => (t - 460) % 90 < 40 },
    { name: "temp", value: "000010000", type: "bus", toggle: "minus", label: t => tempLabel(t) }
];

for (let bit = 8; bit >= 0; bit--) {
    signals.push({ name: "[" + bit + "]", value: bit === 4 ? "1" : "0", bit: bit, level: t => count(t) === bit });
}

signals.push(
    { name: "temp0", value: "0", level: t => (t - 380) % 180 < 20 },
    { name: "temp4", value: "1", level: t => (t - 460) % 180 < 20 },
    { name: "temp5", value: "0", level: t => (t - 480) % 180 < 20 },
    { name: "cnt", value: "0100", type: "bus", toggle: "plus", label: t => t < 500 ? "0..." : count(t).toString(2).padStart(4, "0") }
);

function count(t) {
    return Math.floor((t - 370) / 20) % 9;
}

function tempLabel(t) {
    if (t < 500) return "0...";
    const high = count(t);
    return (high === 8 ? "100" : high === 7 ? "010" : high === 6 ? "001" : "000") + "...";
}

function line(x1, y1, x2, y2, color, width) {
    return `<path d="M${x1} ${y1}L${x2} ${y2}" stroke="${color}" stroke-width="${width || 1}"/>`;
}

function text(x, y, value, color, anchor) {
    return `<text x="${x}" y="${y}" fill="${color}" text-anchor="${anchor || "start"}">${value}</text>`;
}

function tracePath(level, y) {
    let last = level(START);
    let d = `M1 ${last ? y - 6 : y + 6}`;
    for (let t = 500; t <= END; t += 10) {
        const now = level(t);
        if (Boolean(now) !== Boolean(last)) {
            d += `H${xAt(t)}V${now ? y - 6 : y + 6}`;
            last = now;
        }
    }
    return d + "H1011";
}

function busShape(t, y, label) {
    const a = t < 500 ? -3.5 : xAt(t);
    const b = t >= 1010 ? 1020.5 : xAt(t + 20);
    const d = `M${a} ${y - 2}h1V${y - 6}H${b - 1}V${y - 2}h1V${y + 2}h-1V${y + 6}H${a + 1}V${y + 2}h-1z`;
    let out = `<path d="${d}" stroke="${BUS}" fill="none"/>`;
    if (t < 1010) out += text(Math.max(a + 2, 2), y + 4, label, "#fff");
    return out;
}

function drawWaves() {
    let out = "";
    let traces = "";
    for (let t = 500; t <= 1000; t += 50) {
        out += line(xAt(t), 0, xAt(t), 419, "#808080");
    }
    out += line(xAt(550), 0, xAt(550), 419, "#f00");
    out += line(xAt(640), 0, xAt(640), 419, "#f00", 3);

    let labels = "";
    signals.forEach((s, i) => {
        const y = 10.5 + 17 * i;
        if (s.type === "const") {
            labels += line(0, y - 6, 1011, y - 6, BUS) + line(0, y + 6, 1011, y + 6, BUS) + text(2, y + 4, s.value, "#fff");
        } else if (s.type === "bus") {
            for (let t = 490; t <= 1010; t += 20) labels += busShape(t, y, s.label(t));
        } else {
            traces += tracePath(s.level, y);
        }
    });
    // the active cursor turns the traces yellow where it crosses them
    out += `<clipPath id="hit"><rect x="274" y="0" width="3" height="419"/></clipPath>`;
    out += `<path d="${traces}" fill="none" stroke="${GREEN}"/>`;
    out += `<path d="${traces}" fill="none" stroke="#ffff00" clip-path="url(#hit)"/>`;
    document.getElementById("wavePlot").innerHTML = out + labels;
}

function drawRuler() {
    const c1 = xAt(550);
    const c2 = xAt(640);
    let out = "";
    for (let t = 500; t <= 1020; t += 5) {
        out += line(xAt(t), t % 50 ? 3 : 0, xAt(t), 7, GREEN);
    }
    out += text(0, 20, "0 ns", GREEN);
    for (let t = 600; t <= 1000; t += 100) {
        out += text(xAt(t), 20, t + " ns", GREEN, "middle");
    }
    out += line(0, 22.5, 1011, 22.5, "#808080") + line(0, 39.5, 1011, 39.5, "#808080");
    out += line(c1, 0, c1, 22, "#f00") + line(c2, 0, c2, 39, "#f00", 3);
    out += line(c1, 31.5, c2, 31.5, "#fff");
    out += `<rect x="${c1 - 18}" y="23.5" width="36" height="15" fill="#000" stroke="#f00"/>` + text(c1, 35, "550 ns", "#f00", "middle");
    out += `<rect x="${c2 - 18}" y="40.5" width="36" height="15" fill="#000" stroke="#f00"/>` + text(c2, 52, "640 ns", "#f00", "middle");
    const mid = Math.round((c1 + c2) / 2) + 8;
    out += `<rect x="${mid - 14}" y="26" width="28" height="11" fill="#000"/>` + text(mid, 36, "90 ns", "#fff", "middle");
    document.getElementById("rulerPlot").innerHTML = out;
    document.getElementById("headPlot").innerHTML = line(c1, 0, c1, 20, "#f00") + line(c2, 0, c2, 20, "#f00", 3);
}

function drawLists() {
    let names = "";
    let values = "";
    signals.forEach(s => {
        let cls = s.selected ? "selected" : "";
        if (s.toggle) cls = "parent";
        if (s.bit !== undefined) cls = s.bit === 0 ? "bit last" : "bit";
        const toggle = s.toggle ? `<button type="button" class="toggle ${s.toggle}" aria-label="Toggle ${s.name}"></button>` : "";
        const shape = s.type === "const" ? "diamondOrange" : "diamond";
        let io = "";
        if (s.io === "in") io = `<use href="#ioArrow" x="0" y="8" width="8" height="8"/>`;
        if (s.io === "out") io = `<use href="#ioArrow" x="8" y="8" width="8" height="8"/>`;
        names += `<li class="${cls}">${toggle}<svg viewBox="0 0 16 16"><use href="#${shape}"/>${io}</svg>${s.name}</li>`;
        values += `<li class="${s.selected ? "selected" : ""}">${s.value}</li>`;
    });
    document.getElementById("names").innerHTML = names;
    document.getElementById("values").innerHTML = values;
}

drawLists();
drawWaves();
drawRuler();
```
